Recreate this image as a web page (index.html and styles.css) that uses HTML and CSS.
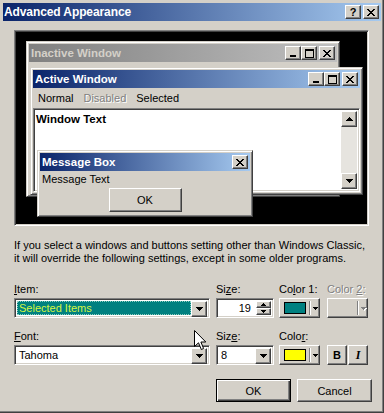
FILE: index.html
```html
<!DOCTYPE html>
<html>
<head>
<meta charset="utf-8">
<title>Advanced Appearance</title>
<link rel="stylesheet" href="styles.css">
</head>
<body>
<div class="dialog">
  <div class="titlebar dlg-title">
    <span class="title-text">Advanced Appearance</span>
    <div class="caps">
      <span class="capbtn help">?</span>
      <span class="capbtn close-gap"><svg width="8" height="7" viewBox="0 0 8 7"><path d="M0 0h2v1H0z M6 0h2v1H6z M1 1h2v1H1z M5 1h2v1H5z M2 2h4v1H2z M3 3h2v1H3z M2 4h4v1H2z M1 5h2v1H1z M5 5h2v1H5z M0 6h2v1H0z M6 6h2v1H6z"/></svg></span>
    </div>
  </div>

  <div class="content">
    <div class="preview">
      <div class="win inactive">
        <div class="titlebar inactive-title">
          <span class="win-title">Inactive Window</span>
          <div class="caps">
            <span class="capbtn"><svg width="6" height="2" viewBox="0 0 6 2" class="g-min"><path d="M0 0h6v2H0z"/></svg></span>
            <span class="capbtn"><svg width="9" height="9" viewBox="0 0 9 9"><path d="M0 0h9v9H0z M1 2v6h7V2z" fill-rule="evenodd"/></svg></span>
            <span class="capbtn close-gap"><svg width="8" height="7" viewBox="0 0 8 7"><path d="M0 0h2v1H0z M6 0h2v1H6z M1 1h2v1H1z M5 1h2v1H5z M2 2h4v1H2z M3 3h2v1H3z M2 4h4v1H2z M1 5h2v1H1z M5 5h2v1H5z M0 6h2v1H0z M6 6h2v1H6z"/></svg></span>
          </div>
        </div>
      </div>

      <div class="win active">
        <div class="titlebar active-title">
          <span class="win-title">Active Window</span>
          <div class="caps">
            <span class="capbtn"><svg width="6" height="2" viewBox="0 0 6 2" class="g-min"><path d="M0 0h6v2H0z"/></svg></span>
            <span class="capbtn"><svg width="9" height="9" viewBox="0 0 9 9"><path d="M0 0h9v9H0z M1 2v6h7V2z" fill-rule="evenodd"/></svg></span>
            <span class="capbtn close-gap"><svg width="8" height="7" viewBox="0 0 8 7"><path d="M0 0h2v1H0z M6 0h2v1H6z M1 1h2v1H1z M5 1h2v1H5z M2 2h4v1H2z M3 3h2v1H3z M2 4h4v1H2z M1 5h2v1H1z M5 5h2v1H5z M0 6h2v1H0z M6 6h2v1H6z"/></svg></span>
          </div>
        </div>
        <div class="menubar">
          <span class="menu-item">Normal</span>
          <span class="menu-item disabled">Disabled</span>
          <span class="menu-item">Selected</span>
        </div>
        <div class="client sunken">
          <div class="client-text">Window Text</div>
          <div class="scrollbar">
            <span class="raised sbtn"><svg width="7" height="4" viewBox="0 0 7 4"><path d="M3 0h1v1H3z M2 1h3v1H2z M1 2h5v1H1z M0 3h7v1H0z"/></svg></span>
            <span class="track"></span>
            <span class="raised sbtn"><svg width="7" height="4" viewBox="0 0 7 4"><path d="M0 0h7v1H0z M1 1h5v1H1z M2 2h3v1H2z M3 3h1v1H3z"/></svg></span>
          </div>
        </div>
      </div>

      <div class="win msg">
        <div class="titlebar active-title">
          <span class="win-title">Message Box</span>
          <div class="caps">
            <span class="capbtn"><svg width="8" height="7" viewBox="0 0 8 7"><path d="M0 0h2v1H0z M6 0h2v1H6z M1 1h2v1H1z M5 1h2v1H5z M2 2h4v1H2z M3 3h2v1H3z M2 4h4v1H2z M1 5h2v1H1z M5 5h2v1H5z M0 6h2v1H0z M6 6h2v1H6z"/></svg></span>
          </div>
        </div>
        <div class="msg-body">
          <div class="msg-text">Message Text</div>
          <span class="raised msg-ok">OK</span>
        </div>
      </div>
    </div>

    <p class="note">If you select a windows and buttons setting other than Windows Classic,<br>it will override the following settings, except in some older programs.</p>

    <div class="fields">
      <label class="lbl"><u>I</u>tem:</label>
      <label class="lbl">Si<u>z</u>e:</label>
      <label class="lbl">Co<u>l</u>or 1:</label>
      <label class="lbl disabled">Color <u>2</u>:</label>

      <div class="combo sunken wide">
        <span class="field selected"><span class="focus">Selected Items</span></span>
        <span class="raised drop"><svg width="7" height="4" viewBox="0 0 7 4"><path d="M0 0h7v1H0z M1 1h5v1H1z M2 2h3v1H2z M3 3h1v1H3z"/></svg></span>
      </div>
      <div class="combo sunken narrow spin">
        <span class="field right">19</span>
        <span class="spinbtns">
          <span class="raised sp"><svg width="5" height="3" viewBox="0 0 5 3"><path d="M2 0h1v1H2z M1 1h3v1H1z M0 2h5v1H0z"/></svg></span>
          <span class="raised sp"><svg width="5" height="3" viewBox="0 0 5 3"><path d="M0 0h5v1H0z M1 1h3v1H1z M2 2h1v1H2z"/></svg></span>
        </span>
      </div>
      <div class="raised colorbtn">
        <span class="swatch teal"></span>
        <span class="sep"></span>
        <svg class="carrow" width="5" height="3" viewBox="0 0 5 3"><path d="M0 0h5v1H0z M1 1h3v1H1z M2 2h1v1H2z"/></svg>
      </div>
      <div class="raised colorbtn off">
        <span class="sep"></span>
        <svg class="carrow" width="5" height="3" viewBox="0 0 5 3"><path d="M0 0h5v1H0z M1 1h3v1H1z M2 2h1v1H2z"/></svg>
      </div>

      <label class="lbl row2"><u>F</u>ont:</label>
      <label class="lbl row2">Siz<u>e</u>:</label>
      <label class="lbl row2">Colo<u>r</u>:</label>
      <span class="row2"></span>

      <div class="combo sunken wide">
        <span class="field">Tahoma</span>
        <span class="raised drop"><svg width="7" height="4" viewBox="0 0 7 4"><path d="M0 0h7v1H0z M1 1h5v1H1z M2 2h3v1H2z M3 3h1v1H3z"/></svg></span>
      </div>
      <div class="combo sunken narrow">
        <span class="field">8</span>
        <span class="raised drop"><svg width="7" height="4" viewBox="0 0 7 4"><path d="M0 0h7v1H0z M1 1h5v1H1z M2 2h3v1H2z M3 3h1v1H3z"/></svg></span>
      </div>
      <div class="raised colorbtn">
        <span class="swatch yellow"></span>
        <span class="sep"></span>
        <svg class="carrow" width="5" height="3" viewBox="0 0 5 3"><path d="M0 0h5v1H0z M1 1h3v1H1z M2 2h1v1H2z"/></svg>
      </div>
      <div class="style-btns">
        <span class="raised sbox bold">B</span>
        <span class="raised sbox ital">I</span>
      </div>
    </div>

    <div class="actions">
      <span class="btn default">OK</span>
      <span class="btn raised">Cancel</span>
    </div>
  </div>

  <svg class="cursor" width="13" height="21" viewBox="0 0 13 21"><path d="M0.5 0.5 L0.5 16.5 L4.5 12.8 L7.3 19.5 L9.6 18.5 L6.9 12 L11.8 12 Z" fill="#fff" stroke="#000" stroke-width="1" stroke-linejoin="miter"/></svg>
</div>
</body>
</html>
```

FILE: styles.css
```css
html, body {
  margin: 0;
  padding: 0;
  background: #d4d0c8;
}

body {
  font-family: "Liberation Sans", Arial, sans-serif;
  font-size: 11px;
  color: #000;
}

.dialog {
  position: relative;
  width: 384px;
  height: 413px;
  box-sizing: border-box;
  padding: 3px 2px 2px 3px;
  background: #d4d0c8;
  border-right: 1px solid #404040;
  border-bottom: 1px solid #404040;
  box-shadow: inset -1px -1px #808080;
  overflow: hidden;
}

/* ---------- generic 3D ---------- */
.raised {
  box-sizing: border-box;
  background: #d4d0c8;
  border: 1px solid;
  border-color: #fff #404040 #404040 #fff;
  box-shadow: inset -1px -1px #808080, inset 1px 1px #d4d0c8;
}

.sunken {
  box-sizing: border-box;
  border: 1px solid;
  border-color: #808080 #fff #fff #808080;
  box-shadow: inset 1px 1px #404040, inset -1px -1px #d4d0c8;
}

/* ---------- title bars ---------- */
.titlebar {
  display: flex;
  align-items: center;
  height: 18px;
  padding: 0 2px 0 2px;
  color: #fff;
  font-weight: bold;
}

.dlg-title {
  background: linear-gradient(to right, #0a246a, #a6caf0);
  padding-left: 1px;
}

.active-title {
  background: linear-gradient(to right, #0a246a, #a6caf0);
}

.inactive-title {
  background: linear-gradient(to right, #808080, #c0c0c0);
  color: #d4d0c8;
}

.title-text {
  font-size: 12px;
  letter-spacing: -0.1px;
}

.win-title {
  font-size: 11.5px;
}

.caps {
  margin-left: auto;
  display: flex;
}

.capbtn {
  width: 16px;
  height: 14px;
  box-sizing: border-box;
  display: flex;
  align-items: center;
  justify-content: center;
  background: #d4d0c8;
  border: 1px solid;
  border-color: #fff #404040 #404040 #fff;
  box-shadow: inset -1px -1px #808080, inset 1px 1px #d4d0c8;
  color: #000;
}

.capbtn svg {
  fill: #000;
  shape-rendering: crispEdges;
}

.capbtn .g-min {
  margin-top: 6px;
  margin-left: -1px;
}

.capbtn.help {
  font-size: 11px;
  font-weight: bold;
  line-height: 1;
}

.close-gap {
  margin-left: 2px;
}

/* ---------- content ---------- */
.content {
  padding: 9px 0 0 11px;
}

.preview {
  position: relative;
  width: 355px;
  height: 196px;
  box-sizing: border-box;
  border: 1px solid;
  border-color: #808080 #fff #fff #808080;
  box-shadow: inset 1px 1px #404040, inset -1px -1px #d4d0c8;
  background: #000;
}

.win {
  position: absolute;
  box-sizing: border-box;
  display: flex;
  flex-direction: column;
  background: #d4d0c8;
  border: 1px solid;
  border-color: #d4d0c8 #404040 #404040 #d4d0c8;
  box-shadow: inset 1px 1px #fff, inset -1px -1px #808080;
  padding: 2px;
}

.inactive {
  left: 11px;
  top: 10px;
  width: 314px;
  height: 156px;
}

.active {
  left: 15px;
  top: 36px;
  width: 333px;
  height: 128px;
}

.msg {
  left: 22px;
  top: 119px;
  width: 216px;
  height: 67px;
}

.menubar {
  display: flex;
  height: 20px;
  align-items: center;
}

.menu-item {
  padding: 0 5px;
}

.disabled {
  color: #808080;
  text-shadow: 1px 1px 0 #fff;
}

.client {
  flex: 1;
  display: flex;
  background: #fff;
  padding: 2px;
}

.client-text {
  flex: 1;
  font-weight: bold;
  font-size: 11.5px;
  padding: 1px 0 0 0;
  line-height: 14px;
}

.scrollbar {
  width: 16px;
  display: flex;
  flex-direction: column;
  background: #e6e4df;
}

.sbtn {
  height: 16px;
  display: flex;
  align-items: center;
  justify-content: center;
}

.sbtn svg, .drop svg, .sp svg, .carrow {
  fill: #000;
  shape-rendering: crispEdges;
}

.track {
  flex: 1;
}

.msg-body {
  display: flex;
  flex-direction: column;
  align-items: center;
}

.msg-text {
  align-self: flex-start;
  padding-left: 2px;
  margin-top: 2px;
  line-height: 13px;
}

.msg-ok {
  width: 73px;
  height: 24px;
  margin-top: 2px;
  display: flex;
  align-items: center;
  justify-content: center;
}

/* ---------- note ---------- */
.note {
  margin: 13px 0 0 0;
  line-height: 13px;
}

/* ---------- fields ---------- */
.fields {
  margin-top: 18px;
  display: grid;
  grid-template-columns: 202px 63px 48px 41px;
  grid-template-rows: 13px 20px 23px 20px;
  row-gap: 2px;
}

.lbl {
  line-height: 13px;
}

.row2 {
  align-self: end;
}

.combo {
  display: flex;
  height: 20px;
  background: #fff;
  padding: 2px;
}

.combo.wide {
  width: 196px;
}

.combo.narrow {
  width: 58px;
}

.field {
  flex: 1;
  display: flex;
  align-items: center;
  padding-left: 2px;
}

.field.selected {
  padding: 0;
  background: #008080;
}

.focus {
  flex: 1;
  align-self: stretch;
  display: flex;
  align-items: center;
  padding-left: 1px;
  color: #d4f542;
  border: 1px dotted #8ccfc0;
}

.field.right {
  justify-content: flex-end;
  padding-right: 5px;
}

.drop {
  width: 16px;
  height: 16px;
  display: flex;
  align-items: center;
  justify-content: center;
}

.spinbtns {
  width: 15px;
  display: flex;
  flex-direction: column;
}

.sp {
  height: 8px;
  display: flex;
  align-items: center;
  justify-content: center;
}

.colorbtn {
  width: 41px;
  height: 20px;
  display: flex;
  align-items: center;
  padding: 0 1px 0 4px;
}

.swatch {
  width: 22px;
  height: 12px;
  box-sizing: border-box;
  border: 1px solid #000;
}

.swatch.teal { background: #008080; }
.swatch.yellow { background: #ffff00; }

.sep {
  width: 1px;
  height: 14px;
  margin-left: 3px;
  margin-right: 2px;
  background: #808080;
  border-right: 1px solid #fff;
}

.colorbtn.off {
  justify-content: flex-end;
}

.colorbtn.off .carrow {
  fill: #808080;
  filter: drop-shadow(1px 1px 0 #fff);
}

.style-btns {
  display: flex;
  gap: 1px;
}

.sbox {
  width: 20px;
  height: 20px;
  display: flex;
  align-items: center;
  justify-content: center;
  font-weight: bold;
}

.sbox.ital {
  font-family: "Liberation Serif", serif;
  font-style: italic;
  font-size: 12px;
}

/* ---------- actions ---------- */
.actions {
  display: flex;
  justify-content: flex-end;
  gap: 6px;
  margin-top: 14px;
  padding-right: 9px;
}

.btn {
  width: 75px;
  height: 23px;
  box-sizing: border-box;
  display: flex;
  align-items: center;
  justify-content: center;
}

.btn.default {
  border: 1px solid #000;
  background: #d4d0c8;
  box-shadow: inset 1px 1px #fff, inset -1px -1px #404040, inset -2px -2px #808080;
}

/* ---------- overlay cursor ---------- */
.cursor {
  position: absolute;
  left: 194px;
  top: 330px;
}
```
